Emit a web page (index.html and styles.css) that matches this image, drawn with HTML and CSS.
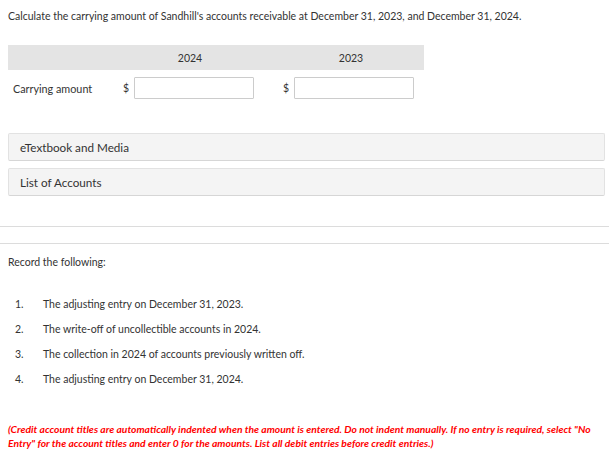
FILE: index.html
```html
<!DOCTYPE html>
<html>
<head>
<meta charset="utf-8">
<link rel="stylesheet" href="styles.css">
</head>
<body>
<div class="page">
  <p class="title">Calculate the carrying amount of Sandhill's accounts receivable at December 31, 2023, and December 31, 2024.</p>
  <div class="grid">
    <div class="head">
      <div class="hcell-label"></div>
      <div class="hcell">2024</div>
      <div class="hcell hcell-last">2023</div>
    </div>
    <div class="row">
      <div class="label">Carrying amount</div>
      <div class="cell"><span class="dollar">$</span><input class="amt" type="text"></div>
      <div class="cell"><span class="dollar">$</span><input class="amt" type="text"></div>
    </div>
  </div>
  <div class="panel panel-first">eTextbook and Media</div>
  <div class="panel">List of Accounts</div>
</div>
<div class="rule rule1"></div>
<div class="rule rule2"></div>
<div class="page">
  <p class="record">Record the following:</p>
  <ol class="items">
    <li><span class="num">1.</span><span>The adjusting entry on December 31, 2023.</span></li>
    <li><span class="num">2.</span><span>The write-off of uncollectible accounts in 2024.</span></li>
    <li><span class="num">3.</span><span>The collection in 2024 of accounts previously written off.</span></li>
    <li><span class="num">4.</span><span>The adjusting entry on December 31, 2024.</span></li>
  </ol>
  <p class="note">(Credit account titles are automatically indented when the amount is entered. Do not indent manually. If no entry is required, select "No Entry" for the account titles and enter 0 for the amounts. List all debit entries before credit entries.)</p>
</div>
</body>
</html>
```
FILE: styles.css
```css
html, body {
  margin: 0;
  padding: 0;
  background: #fff;
}
body {
  font-family: Lato, "Open Sans", sans-serif;
  font-size: 10.5px;
  color: #333;
}
.page {
  padding: 0 4px 0 8px;
}
.title {
  margin: 0;
  padding-top: 10px;
  line-height: 13px;
}
.grid {
  margin-top: 22px;
  width: 416px;
}
.head {
  display: grid;
  grid-template-columns: 112px 140px 164px;
  height: 25px;
  background: #e4e4e4;
  align-items: center;
}
.hcell {
  text-align: center;
}
.hcell-last {
  padding-left: 18px;
}
.row {
  display: grid;
  grid-template-columns: 115px 160px 141px;
  align-items: center;
  margin-top: 7px;
  height: 22px;
}
.label {
  padding-left: 5px;
  font-size: 10.8px;
}
.cell {
  display: flex;
  align-items: center;
}
.dollar {
  width: 11px;
}
.amt {
  box-sizing: border-box;
  width: 120px;
  height: 22px;
  margin: 0;
  border: 1px solid #cccccc;
  border-radius: 1px;
  background: #fff;
  padding: 0 4px;
  font: inherit;
}
.panel {
  box-sizing: border-box;
  margin-top: 7px;
  height: 28px;
  background: #f4f4f4;
  border: 1px solid #e2e2e2;
  border-bottom-color: #d6d6d6;
  border-radius: 2px;
  padding-left: 11px;
  display: flex;
  align-items: center;
  font-size: 11.7px;
}
.panel-first {
  margin-top: 34px;
}
.rule {
  height: 1px;
  background: #dcdcdc;
}
.rule1 {
  margin-top: 30px;
}
.rule2 {
  margin-top: 16px;
}
.record {
  margin: 12px 0 0;
  line-height: 13px;
}
.items {
  list-style: none;
  margin: 29px 0 0;
  padding: 0;
}
.items li {
  display: flex;
  height: 25px;
  line-height: 13px;
}
.num {
  width: 35px;
  padding-left: 7px;
  box-sizing: border-box;
}
.note {
  margin: 25px 0 0;
  color: #f00;
  font-style: italic;
  font-weight: 700;
  line-height: 13.5px;
  font-size: 10.3px;
}
```
